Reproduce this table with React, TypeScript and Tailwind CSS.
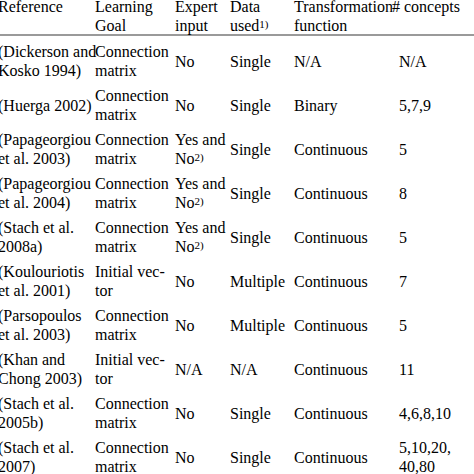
const SERIF = { fontFamily: '"Liberation Serif", "Times New Roman", serif' };

type Row = {
  ref: [string, string];
  goal: [string, string];
  expert: "No" | "N/A" | "YesNo";
  data: string;
  fn: string;
  concepts: string[];
};

const ROWS: Row[] = [
  { ref: ["(Dickerson and", "Kosko 1994)"], goal: ["Connection", "matrix"], expert: "No", data: "Single", fn: "N/A", concepts: ["N/A"] },
  { ref: ["(Huerga 2002)", ""], goal: ["Connection", "matrix"], expert: "No", data: "Single", fn: "Binary", concepts: ["5,7,9"] },
  { ref: ["(Papageorgiou", "et al. 2003)"], goal: ["Connection", "matrix"], expert: "YesNo", data: "Single", fn: "Continuous", concepts: ["5"] },
  { ref: ["(Papageorgiou", "et al. 2004)"], goal: ["Connection", "matrix"], expert: "YesNo", data: "Single", fn: "Continuous", concepts: ["8"] },
  { ref: ["(Stach et al.", "2008a)"], goal: ["Connection", "matrix"], expert: "YesNo", data: "Single", fn: "Continuous", concepts: ["5"] },
  { ref: ["(Koulouriotis", "et al. 2001)"], goal: ["Initial vec-", "tor"], expert: "No", data: "Multiple", fn: "Continuous", concepts: ["7"] },
  { ref: ["(Parsopoulos", "et al. 2003)"], goal: ["Connection", "matrix"], expert: "No", data: "Multiple", fn: "Continuous", concepts: ["5"] },
  { ref: ["(Khan and", "Chong 2003)"], goal: ["Initial vec-", "tor"], expert: "N/A", data: "N/A", fn: "Continuous", concepts: ["11"] },
  { ref: ["(Stach et al.", "2005b)"], goal: ["Connection", "matrix"], expert: "No", data: "Single", fn: "Continuous", concepts: ["4,6,8,10"] },
  { ref: ["(Stach et al.", "2007)"], goal: ["Connection", "matrix"], expert: "No", data: "Single", fn: "Continuous", concepts: ["5,10,20,", "40,80"] },
];

// column edges taken from the source table: ref | goal | expert | data | function | concepts
const COLS = "grid grid-cols-[97px_80px_55px_64px_105px_1fr]";

function Lines({ lines }: { lines: string[] }) {
  const shown = lines.filter(Boolean);
  return (
    <div className="whitespace-nowrap">
      {shown.map((l, i) => (
        <div key={i}>{l}</div>
      ))}
    </div>
  );
}

function Sup({ children }: { children: string }) {
  return <sup className="relative -top-[3px] text-[11px] leading-none">{children}</sup>;
}

export default function App() {
  return (
    <div className="h-[474px] w-[474px] overflow-hidden bg-white text-black" style={SERIF}>
      <div className="-ml-[2px] -mt-[3px] text-[16px] leading-[19px]">
        <div className={`${COLS} h-[39px] items-start border-b-2 border-[#9a9a9a]`}>
          <div>Reference</div>
          <div>Learning<br />Goal</div>
          <div>Expert<br />input</div>
          <div className="whitespace-nowrap">Data<br />used<Sup>1)</Sup></div>
          <div className="whitespace-nowrap">Transformation<br />function</div>
          <div className="-ml-[7px] whitespace-nowrap"># concepts</div>
        </div>
        <div className="mt-[3px]">
          {ROWS.map((r, i) => (
            <div key={i} className={`${COLS} h-[44px] items-center`}>
              <Lines lines={r.ref} />
              <Lines lines={r.goal} />
              {r.expert === "YesNo" ? (
                <div className="whitespace-nowrap">
                  <div>Yes and</div>
                  <div>No<Sup>2)</Sup></div>
                </div>
              ) : (
                <div>{r.expert}</div>
              )}
              <div>{r.data}</div>
              <div>{r.fn}</div>
              <Lines lines={r.concepts} />
            </div>
          ))}
        </div>
      </div>
    </div>
  );
}
